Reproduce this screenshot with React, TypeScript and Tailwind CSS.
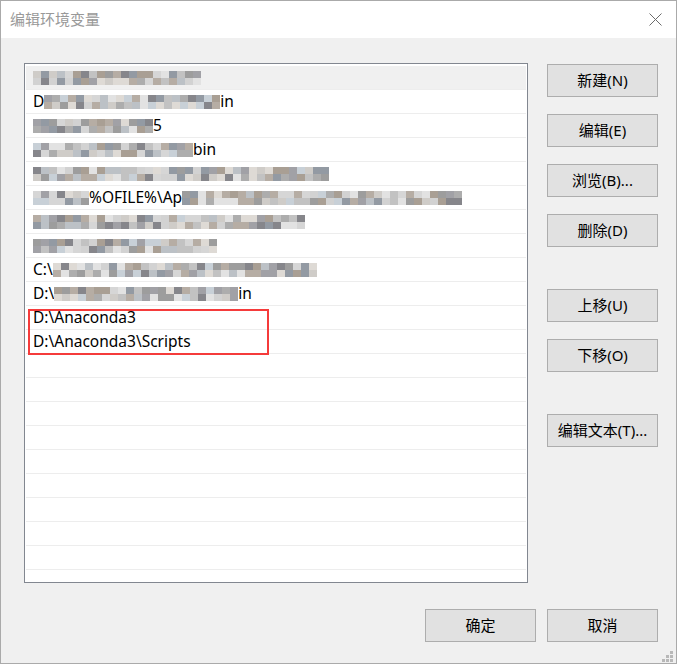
import React from "react";

type Part = { t: string } | { m: number };

const rows: Part[][] = [
  [{ m: 168 }],
  [{ t: "D" }, { m: 176 }, { t: "in" }],
  [{ m: 120 }, { t: "5" }],
  [{ m: 160 }, { t: "bin" }],
  [{ m: 292 }],
  [{ m: 54 }, { t: "%OFILE%\\Ap" }, { m: 274 }],
  [{ m: 270 }],
  [{ m: 180 }],
  [{ t: "C:\\" }, { m: 264 }],
  [{ t: "D:\\" }, { m: 182 }, { t: "in" }],
  [{ t: "D:\\Anaconda3" }],
  [{ t: "D:\\Anaconda3\\Scripts" }],
];

const palette = [
  "#c2c2c2", "#adadad", "#9d9d9d", "#cfccc8", "#b6ada4", "#939aa3",
  "#bcc1c6", "#d6d6d6", "#e2e2e2", "#86868b", "#a99f94", "#c8d0d7",
  "#dedad5", "#a1a1a6", "#d2d2d2",
];

function Mosaic({ width, seed }: { width: number; seed: number }) {
  let s = seed * 9301 + 49297;
  const next = () => {
    s = (s * 9301 + 49297) % 233280;
    return palette[Math.floor((s / 233280) * palette.length)];
  };
  const cols = Math.ceil(width / 8);
  return (
    <div className="flex h-[14px]">
      {Array.from({ length: cols }).map((_, i) => (
        <div key={i} className="flex flex-col w-[8px]">
          <div className="h-[7px]" style={{ backgroundColor: next() }} />
          <div className="h-[7px]" style={{ backgroundColor: next() }} />
        </div>
      ))}
    </div>
  );
}

function Btn({ label, className = "" }: { label: string; className?: string }) {
  return (
    <div
      className={`w-[111px] h-[33px] flex items-center justify-center bg-[#e1e1e1] border border-[#adadad] text-[15px] text-black ${className}`}
    >
      {label}
    </div>
  );
}

export default function App() {
  const total = 21;
  return (
    <div
      className="w-[677px] h-[664px] border border-[#aaaaaa] flex flex-col bg-white relative"
      style={{ fontFamily: '"Noto Sans", "Noto Sans CJK SC", sans-serif' }}
    >
      {/* Title bar */}
      <div className="h-[37px] flex items-center justify-between pl-[9px] pr-[14px] bg-white">
        <span className="text-[15px] text-[#999999]">编辑环境变量</span>
        <svg width="13" height="13" viewBox="0 0 13 13">
          <path d="M0.5 0.5 L12.5 12.5 M12.5 0.5 L0.5 12.5" stroke="#6b6b6b" strokeWidth="1" fill="none" />
        </svg>
      </div>

      {/* Body */}
      <div className="flex-1 bg-[#f0f0f0] flex flex-col pt-[25px] pl-[23px] pr-[18px]">
        <div className="flex">
          {/* List */}
          <div className="relative w-[504px] h-[520px] border border-[#828790] bg-white pt-[2px] px-[1px] overflow-hidden">
            {Array.from({ length: total }).map((_, i) => {
              const parts = rows[i];
              return (
                <div
                  key={i}
                  className={`h-[24px] flex items-center pl-[7px] border-b border-[#ededed] text-[15.5px] text-black whitespace-nowrap ${
                    i === 0 ? "bg-[#f0f0f0]" : ""
                  }`}
                >
                  {parts?.map((p, j) =>
                    "t" in p ? (
                      <span key={j}>{p.t}</span>
                    ) : (
                      <Mosaic key={j} width={p.m} seed={i * 7 + j + 3} />
                    )
                  )}
                </div>
              );
            })}
            <div className="absolute left-[3px] top-[245px] w-[241px] h-[46px] border-2 border-[#f53b3b]" />
          </div>

          {/* Side buttons */}
          <div className="ml-[19px] pt-[1px] flex flex-col">
            <Btn label="新建(N)" />
            <Btn label="编辑(E)" className="mt-[17px]" />
            <Btn label="浏览(B)..." className="mt-[17px]" />
            <Btn label="删除(D)" className="mt-[17px]" />
            <Btn label="上移(U)" className="mt-[42px]" />
            <Btn label="下移(O)" className="mt-[17px]" />
            <Btn label="编辑文本(T)..." className="mt-[42px]" />
          </div>
        </div>

        {/* Bottom buttons */}
        <div className="flex justify-end gap-[11px] mt-[26px]">
          <Btn label="确定" />
          <Btn label="取消" />
        </div>
      </div>

      {/* Resize grip */}
      <svg className="absolute right-[3px] bottom-[1px]" width="11" height="11" viewBox="0 0 11 11">
        <rect x="8" y="0" width="3" height="3" fill="#b8b8b8" />
        <rect x="4" y="4" width="3" height="3" fill="#b8b8b8" />
        <rect x="8" y="4" width="3" height="3" fill="#b8b8b8" />
        <rect x="0" y="8" width="3" height="3" fill="#b8b8b8" />
        <rect x="4" y="8" width="3" height="3" fill="#b8b8b8" />
        <rect x="8" y="8" width="3" height="3" fill="#b8b8b8" />
      </svg>
    </div>
  );
}
